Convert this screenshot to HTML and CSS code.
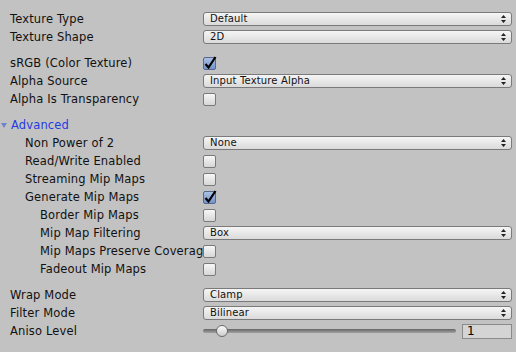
FILE: index.html
```html
<!DOCTYPE html>
<html lang="en">
<head>
  <meta charset="UTF-8" />
  <title>Texture Import Settings</title>
  <link rel="stylesheet" href="styles.css">
</head>
<body>
  <div class="inspector">
    <section class="group">
      <div class="row"><span class="label">Texture Type</span><div class="popup">Default<svg class="arrows" width="5" height="8" viewBox="0 0 5 8"><path d="M2.5 0 L5 3 L0 3 Z M0 5 L5 5 L2.5 8 Z" fill="#222"/></svg></div></div>
      <div class="row"><span class="label">Texture Shape</span><div class="popup">2D<svg class="arrows" width="5" height="8" viewBox="0 0 5 8"><path d="M2.5 0 L5 3 L0 3 Z M0 5 L5 5 L2.5 8 Z" fill="#222"/></svg></div></div>
    </section>

    <section class="group">
      <div class="row"><span class="label">sRGB (Color Texture)</span><div class="toggle on"><svg class="check" width="13" height="14" viewBox="0 0 13 14"><path d="M1.5 8 L4.5 11.5 L11.5 1" fill="none" stroke="#000" stroke-width="2.2"/></svg></div></div>
      <div class="row"><span class="label">Alpha Source</span><div class="popup">Input Texture Alpha<svg class="arrows" width="5" height="8" viewBox="0 0 5 8"><path d="M2.5 0 L5 3 L0 3 Z M0 5 L5 5 L2.5 8 Z" fill="#222"/></svg></div></div>
      <div class="row"><span class="label">Alpha Is Transparency</span><div class="toggle"></div></div>
    </section>

    <section class="group">
      <div class="foldout"><span class="tri"></span>Advanced</div>
      <div class="row lvl1"><span class="label">Non Power of 2</span><div class="popup">None<svg class="arrows" width="5" height="8" viewBox="0 0 5 8"><path d="M2.5 0 L5 3 L0 3 Z M0 5 L5 5 L2.5 8 Z" fill="#222"/></svg></div></div>
      <div class="row lvl1"><span class="label">Read/Write Enabled</span><div class="toggle"></div></div>
      <div class="row lvl1"><span class="label">Streaming Mip Maps</span><div class="toggle"></div></div>
      <div class="row lvl1"><span class="label">Generate Mip Maps</span><div class="toggle on"><svg class="check" width="13" height="14" viewBox="0 0 13 14"><path d="M1.5 8 L4.5 11.5 L11.5 1" fill="none" stroke="#000" stroke-width="2.2"/></svg></div></div>
      <div class="row lvl2"><span class="label">Border Mip Maps</span><div class="toggle"></div></div>
      <div class="row lvl2"><span class="label">Mip Map Filtering</span><div class="popup">Box<svg class="arrows" width="5" height="8" viewBox="0 0 5 8"><path d="M2.5 0 L5 3 L0 3 Z M0 5 L5 5 L2.5 8 Z" fill="#222"/></svg></div></div>
      <div class="row lvl2"><span class="label">Mip Maps Preserve Coverage</span><div class="toggle"></div></div>
      <div class="row lvl2"><span class="label">Fadeout Mip Maps</span><div class="toggle"></div></div>
    </section>

    <section class="group">
      <div class="row"><span class="label">Wrap Mode</span><div class="popup">Clamp<svg class="arrows" width="5" height="8" viewBox="0 0 5 8"><path d="M2.5 0 L5 3 L0 3 Z M0 5 L5 5 L2.5 8 Z" fill="#222"/></svg></div></div>
      <div class="row"><span class="label">Filter Mode</span><div class="popup">Bilinear<svg class="arrows" width="5" height="8" viewBox="0 0 5 8"><path d="M2.5 0 L5 3 L0 3 Z M0 5 L5 5 L2.5 8 Z" fill="#222"/></svg></div></div>
      <div class="row">
        <span class="label">Aniso Level</span>
        <div class="slider">
          <div class="track"><span class="thumb"></span></div>
          <div class="field">1</div>
        </div>
      </div>
    </section>
  </div>
</body>
</html>
```

FILE: styles.css
```css
body {
  margin: 0;
  background: #c2c2c2;
  font-family: "DejaVu Sans", sans-serif;
  color: #111;
}
.inspector {
  padding: 10px 4px 0 0;
}
.group + .group {
  margin-top: 8px;
}
.row {
  display: flex;
  align-items: center;
  height: 18px;
}
.label {
  flex: none;
  width: 203px;
  box-sizing: border-box;
  padding-left: 10px;
  font-size: 11.5px;
  letter-spacing: 0.15px;
  white-space: nowrap;
  overflow: hidden;
}
.lvl1 .label {
  padding-left: 25px;
}
.lvl2 .label {
  padding-left: 40px;
}
.popup {
  flex: 1;
  position: relative;
  height: 14px;
  box-sizing: border-box;
  padding-left: 6px;
  border: 1px solid #7a7a7a;
  border-radius: 3px;
  background: linear-gradient(#f5f5f5, #dadada);
  font-size: 10px;
  letter-spacing: 0.15px;
  line-height: 12px;
  color: #111;
}
.arrows {
  position: absolute;
  right: 5px;
  top: 2px;
}
.toggle {
  position: relative;
  width: 13px;
  height: 13px;
  box-sizing: border-box;
  border: 1px solid #7a7a7a;
  border-radius: 2px;
  background: linear-gradient(#f7f7f7, #d6d6d6);
}
.toggle.on {
  border-color: #55698c;
  background: linear-gradient(#aac0e4, #7393c9);
}
.check {
  position: absolute;
  left: 0;
  top: -2px;
}
.foldout {
  display: flex;
  align-items: center;
  height: 18px;
  padding-left: 1px;
  font-size: 11.5px;
  letter-spacing: 0.15px;
  color: #1f3ce0;
}
.tri {
  width: 0;
  height: 0;
  margin-right: 4px;
  border-left: 3px solid transparent;
  border-right: 3px solid transparent;
  border-top: 5px solid #6f84cf;
}
.slider {
  flex: 1;
  display: flex;
  align-items: center;
  gap: 6px;
}
.track {
  flex: 1;
  position: relative;
  height: 4px;
  border-radius: 2px;
  background: linear-gradient(#646464, #a2a2a2);
}
.thumb {
  position: absolute;
  left: 13px;
  top: -4px;
  width: 12px;
  height: 12px;
  box-sizing: border-box;
  border: 1px solid #6a6a6a;
  border-radius: 50%;
  background: linear-gradient(#fbfbfb, #cdcdcd);
}
.field {
  width: 50px;
  height: 15px;
  box-sizing: border-box;
  padding-left: 4px;
  border: 1px solid #8a8a8a;
  background: #d4d4d4;
  font-size: 12px;
  line-height: 13px;
  color: #000;
}
```
